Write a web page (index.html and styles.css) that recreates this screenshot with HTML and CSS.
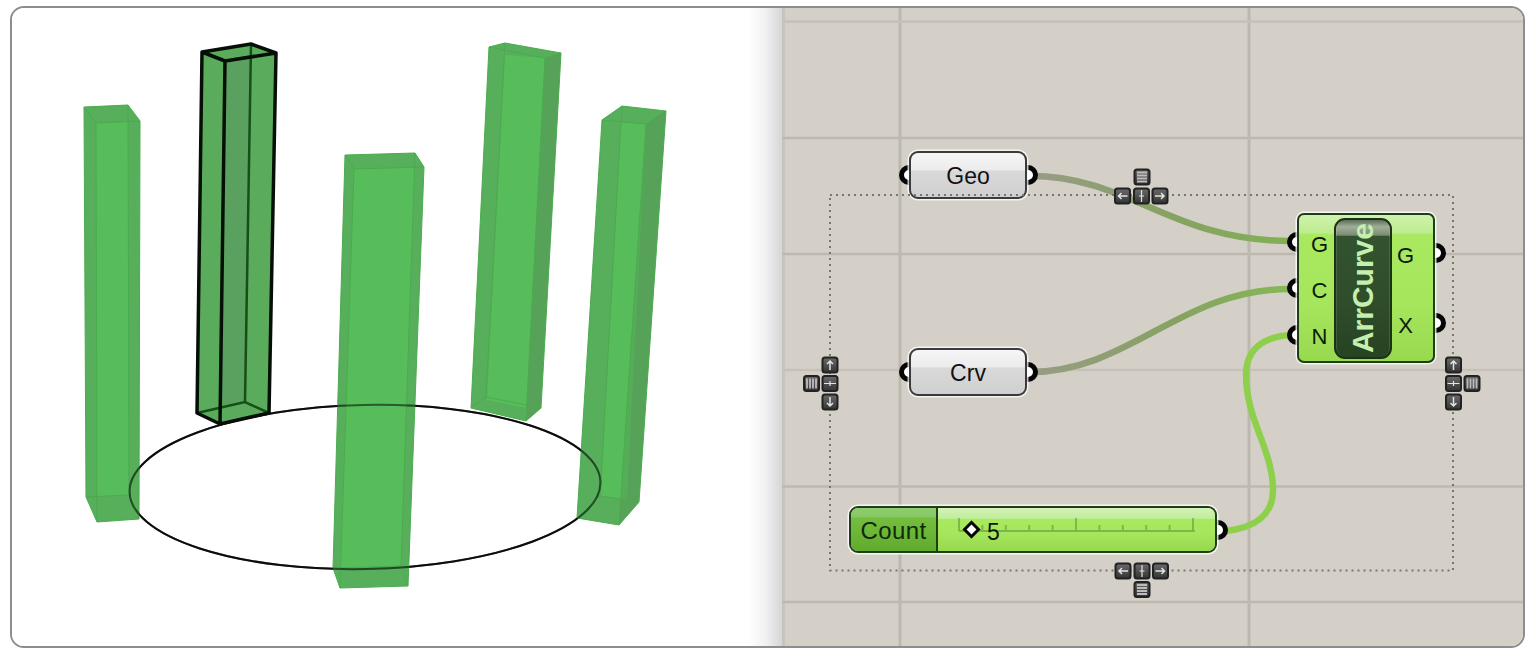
FILE: index.html
```html
<!DOCTYPE html>
<html lang="en">
<head>
<meta charset="utf-8">
<title>ArrCurve</title>
<link rel="stylesheet" href="styles.css">
</head>
<body>
<main class="frame">
  <section class="viewport">
    <svg class="scene" viewBox="12 8 770 638" width="770" height="638" aria-label="3D view">
      <ellipse class="circle" cx="365" cy="487" rx="235.500" ry="82" transform="rotate(-1.200 365 487)"/>

      <g class="box">
        <polygon class="side" points="84,107 128,105 140,121 139,519 97,522 86,497"/>
        <polygon class="mid" points="96,123 128,122 129,495 97,497"/>
        <path class="edge" d="M84 107L128 105L140 121L139 519L97 522L86 497ZM84 107L96 123L140 121M96 123L97 522M128 105L129 495M86 497L129 495L139 519"/>
      </g>

      <g class="box">
        <polygon class="side" points="345,155 415,153 424,167 408,586 340,588 333,568"/>
        <polygon class="mid" points="354,169 415,167 401,566 340,568"/>
        <path class="edge" d="M345 155L415 153L424 167L408 586L340 588L333 568ZM345 155L354 169L424 167M354 169L340 588M415 153L401 566M333 568L401 566L408 586"/>
      </g>

      <g class="box">
        <polygon class="side" points="489,47 505,43 561,53 541,408 526,421 471,408"/>
        <polygon class="mid" points="505,55 545,58 526,408 487,400"/>
        <polygon class="far" points="545,58 561,53 541,408 526,421"/>
        <path class="edge" d="M489 47L505 43L561 53L541 408L526 421L471 408ZM489 47L545 58L561 53M545 58L526 421M505 43L486 397M471 408L486 397L541 408"/>
      </g>

      <g class="box">
        <polygon class="side" points="602,120 622,106 666,111 639,502 619,525 577,518"/>
        <polygon class="mid" points="621,122 646,124 627,499 601,496"/>
        <polygon class="far" points="646,124 666,111 639,502 619,525"/>
        <path class="edge" d="M602 120L622 106L666 111L639 502L619 525L577 518ZM602 120L646 124L666 111M646 124L619 525M622 106L600 496M577 518L600 496L639 502"/>
      </g>

      <g class="box box-selected">
        <polygon class="side" points="202,52 251,44 276,53 269,413 220,424 197,413"/>
        <polygon class="mid" points="225,61 250,58 245,402 220,408"/>
        <path class="hidden-edge" d="M251 44L245 402M197 413L245 402L269 413"/>
        <path class="sel-edge" d="M202 52L251 44L276 53L269 413L220 424L197 413ZM202 52L225 61L276 53M225 61L220 424"/>
      </g>

      <ellipse class="circle circle-over" cx="365" cy="487" rx="235.500" ry="82" transform="rotate(-1.200 365 487)"/>
    </svg>
  </section>

  <section class="canvas">
    <svg class="layer" viewBox="782 8 741 638" width="741" height="638" aria-hidden="true">
      <defs>
        <linearGradient id="wireGeo" gradientUnits="userSpaceOnUse" x1="1030" y1="0" x2="1290" y2="0">
          <stop offset="0" stop-color="#989b86"/>
          <stop offset="0.55" stop-color="#86a262"/>
          <stop offset="1" stop-color="#82b054"/>
        </linearGradient>
        <linearGradient id="wireCrv" gradientUnits="userSpaceOnUse" x1="1030" y1="0" x2="1290" y2="0">
          <stop offset="0" stop-color="#989b86"/>
          <stop offset="0.55" stop-color="#86a262"/>
          <stop offset="1" stop-color="#85b855"/>
        </linearGradient>
      </defs>
      <path class="grid grid-edge" d="M783.500 8V646"/>
      <path class="grid" d="M900 8V646M1249 8V646"/>
      <path class="grid-h grid-faint" d="M782 21.500H1523M782 370H1523"/>
      <path class="grid-h" d="M782 138H1523M782 254H1523M782 486.500H1523M782 602H1523"/>
      <path class="wire wire-geo" d="M1030 176C1130 176 1170 241 1290 241"/>
      <path class="wire wire-crv" d="M1030 372C1130 372 1180 289 1290 289"/>
      <path class="wire wire-num" d="M1290 335C1262 337 1246 350 1246 375C1246 420 1273 450 1273 490C1273 515 1255 528 1225 531"/>
      <circle class="port" cx="909" cy="175" r="7.500"/>
      <circle class="port" cx="1028" cy="175" r="7.500"/>
      <circle class="port" cx="909" cy="372" r="7.500"/>
      <circle class="port" cx="1028" cy="372" r="7.500"/>
      <circle class="port" cx="1297" cy="242" r="7.500"/>
      <circle class="port" cx="1297" cy="288" r="7.500"/>
      <circle class="port" cx="1297" cy="335" r="7.500"/>
      <circle class="port" cx="1436" cy="253" r="7.500"/>
      <circle class="port" cx="1436" cy="323" r="7.500"/>
      <circle class="port" cx="1218" cy="530" r="7.500"/>
    </svg>

    <div class="node node-geo">Geo</div>
    <div class="node node-crv">Crv</div>

    <div class="comp">
      <div class="comp-col comp-in"><span>G</span><span>C</span><span>N</span></div>
      <div class="comp-name"><span>ArrCurve</span></div>
      <div class="comp-col comp-out"><span>G</span><span>X</span></div>
    </div>

    <div class="slider">
      <div class="slider-label">Count</div>
      <div class="slider-track">
        <svg class="ticks" viewBox="0 0 240 16" width="240" height="16" aria-hidden="true">
          <path d="M2 13H238M2 0V13M25.400 7V13M48.800 7V13M72.200 7V13M95.600 7V13M119 0V13M142.400 7V13M165.800 7V13M189.200 7V13M212.600 7V13M236 0V13"/>
        </svg>
        <i class="knob"></i>
        <span class="slider-value">5</span>
      </div>
    </div>

    <svg class="layer layer-top" viewBox="782 8 741 638" width="741" height="638" aria-hidden="true">
      <defs>
        <linearGradient id="gripFill" x1="0" y1="0" x2="0" y2="1">
          <stop offset="0" stop-color="#6a6a6a"/>
          <stop offset="0.5" stop-color="#505050"/>
          <stop offset="1" stop-color="#333"/>
        </linearGradient>
        <g id="g-base"><rect class="grip" x="-7.500" y="-7.500" width="15" height="15" rx="2.500"/></g>
        <g id="g-left"><use href="#g-base"/><path class="glyph" d="M5 0H-4M-1 -3L-4 0L-1 3"/></g>
        <g id="g-right"><use href="#g-base"/><path class="glyph" d="M-5 0H4M1 -3L4 0L1 3"/></g>
        <g id="g-up"><use href="#g-base"/><path class="glyph" d="M0 5V-4M-3 -1L0 -4L3 -1"/></g>
        <g id="g-down"><use href="#g-base"/><path class="glyph" d="M0 -5V4M-3 1L0 4L3 1"/></g>
        <g id="g-midv"><use href="#g-base"/><path class="glyph glyph-thin" d="M0 -6V6M-2.500 0H2.500"/></g>
        <g id="g-midh"><use href="#g-base"/><path class="glyph glyph-thin" d="M-6 0H6M0 -2.500V2.500"/></g>
        <g id="g-rows"><use href="#g-base"/><path class="bars" d="M-5 -4.500H5M-5 -1.500H5M-5 1.500H5M-5 4.500H5"/></g>
        <g id="g-cols"><use href="#g-base"/><path class="bars" d="M-4.500 -5V5M-1.500 -5V5M1.500 -5V5M4.500 -5V5"/></g>
      </defs>
      <rect class="dots" x="830" y="195" width="623" height="375.500"/>
      <use href="#g-rows" x="1142" y="177"/>
      <use href="#g-left" x="1122.500" y="196"/>
      <use href="#g-midv" x="1141.500" y="196"/>
      <use href="#g-right" x="1160" y="196"/>
      <use href="#g-left" x="1123" y="571"/>
      <use href="#g-midv" x="1142" y="571"/>
      <use href="#g-right" x="1160.500" y="571"/>
      <use href="#g-rows" x="1142" y="589.500"/>
      <use href="#g-up" x="830" y="365"/>
      <use href="#g-midh" x="830" y="383.500"/>
      <use href="#g-down" x="830" y="402"/>
      <use href="#g-cols" x="811.500" y="383.500"/>
      <use href="#g-up" x="1453.500" y="365"/>
      <use href="#g-midh" x="1453.500" y="383.500"/>
      <use href="#g-down" x="1453.500" y="402"/>
      <use href="#g-cols" x="1472" y="383.500"/>
    </svg>
  </section>
</main>
</body>
</html>
```

FILE: styles.css
```css
* { box-sizing: border-box; }

html, body {
  margin: 0;
  height: 100%;
  background: #fff;
  overflow: hidden;
}

body {
  padding: 6px 0 0 10px;
  font-family: "Liberation Sans", Arial, sans-serif;
}

.frame {
  display: flex;
  width: 1515px;
  height: 642px;
  border: 2px solid #8d8d8d;
  border-radius: 14px;
  overflow: hidden;
  background: #fff;
}

.viewport {
  position: relative;
  flex: 0 0 770px;
  background: #fff;
}

.viewport::after {
  content: "";
  position: absolute;
  top: 0;
  right: 0;
  bottom: 0;
  width: 34px;
  background: linear-gradient(90deg, rgba(210, 210, 210, 0), rgba(210, 210, 210, .3) 50%, #d6d6d6);
}

.scene { display: block; position: relative; z-index: 1; }

.circle { fill: none; stroke: #0d0d0d; stroke-width: 2; }
.circle-over { opacity: .55; }

.box .side { fill: rgb(64, 163, 68); fill-opacity: .88; }
.box .mid { fill: rgb(88, 192, 90); fill-opacity: .8; }
.box .far { fill: rgb(85, 135, 85); fill-opacity: .3; }
.box .edge { fill: none; stroke: #4bab4e; stroke-width: 1; stroke-linejoin: round; }

.box-selected .side { fill: rgb(62, 156, 64); fill-opacity: .85; }
.box-selected .mid { fill: rgb(90, 150, 95); fill-opacity: .5; }
.hidden-edge { fill: none; stroke: #174f19; stroke-width: 2.500; }
.sel-edge { fill: none; stroke: #060f06; stroke-width: 3.500; stroke-linejoin: round; }

.canvas {
  position: relative;
  flex: 0 0 741px;
  background: #d4d0c8;
  overflow: hidden;
}

.layer { position: absolute; left: 0; top: 0; display: block; }
.layer-top { pointer-events: none; }

.grid { fill: none; stroke: #bcb8b0; stroke-width: 3; }
.grid-edge { stroke: #c7c4bd; }
.grid-h { fill: none; stroke: #bdb9b1; stroke-width: 2.500; }
.grid-faint { stroke: #c5c1b9; }

.wire { fill: none; stroke-width: 6.500; }
.wire-geo { stroke: url(#wireGeo); }
.wire-crv { stroke: url(#wireCrv); }
.wire-num { stroke: #8ed04b; }

.port { fill: #fff; stroke: #050505; stroke-width: 5; }

.dots { fill: none; stroke: #77766f; stroke-width: 2; stroke-dasharray: 2 4; }

.grip { fill: url(#gripFill); stroke: #222; stroke-width: 2; }
.glyph { fill: none; stroke: #e4e4e4; stroke-width: 1.500; }
.glyph-thin { stroke-width: 1.200; }
.bars { fill: none; stroke: #bdbdbd; stroke-width: 1.800; }

.node {
  position: absolute;
  left: 127px;
  width: 118px;
  height: 48px;
  padding-top: 2px;
  display: flex;
  align-items: center;
  justify-content: center;
  font-size: 23px;
  color: #111;
  border: 2px solid #3b3b3b;
  border-radius: 9px;
  background: linear-gradient(180deg, #f6f6f6 0, #ececec 38%, #d9d9d9 41%, #d0d0d0 100%);
  box-shadow: 0 0 0 1.500px rgba(255, 255, 255, .75);
}

.node-geo { top: 143px; }
.node-crv { top: 340px; }

.comp {
  position: absolute;
  left: 515px;
  top: 205px;
  width: 138px;
  height: 150px;
  display: flex;
  border: 2px solid #1e3f15;
  border-radius: 7px;
  background: linear-gradient(180deg, #cff2ad 0, #bdec90 12%, #a9e960 13.500%, #a5e65c 60%, #98d950 100%);
  box-shadow: 0 0 0 1.500px rgba(255, 255, 255, .8);
  color: #0b1a08;
  font-size: 22px;
}

.comp-col { position: relative; flex: 0 0 35px; }
.comp-col span { position: absolute; left: 0; width: 100%; line-height: 22px; text-align: center; }

.comp-in span { left: 3px; }
.comp-in span:nth-child(1) { top: 19px; }
.comp-in span:nth-child(2) { top: 65px; }
.comp-in span:nth-child(3) { top: 111px; }

.comp-out { flex: 0 0 41px; }
.comp-out span { left: -7px; }
.comp-out span:nth-child(1) { top: 30px; }
.comp-out span:nth-child(2) { top: 100px; }

.comp-name {
  flex: 0 0 58px;
  margin-top: 3px;
  height: 141px;
  display: flex;
  align-items: center;
  justify-content: center;
  border: 2px solid #1a3315;
  border-radius: 11px;
  background: linear-gradient(180deg, #5d6f57 0, #9fae98 5%, #7b8e74 11%, #33522e 12%, #2f4d2a 60%, #264322 100%);
  box-shadow: inset 1px 0 0 rgba(255, 255, 255, .12), inset -1px 0 0 rgba(255, 255, 255, .12);
  color: #c4f0ad;
}

.comp-name span {
  writing-mode: vertical-rl;
  transform: rotate(180deg);
  font-size: 30px;
  font-weight: 700;
  line-height: 1;
}

.slider {
  position: absolute;
  left: 67px;
  top: 498px;
  width: 368px;
  height: 47px;
  display: flex;
  border: 2px solid #1e3f15;
  border-radius: 9px;
  overflow: hidden;
  box-shadow: 0 0 0 1.500px rgba(255, 255, 255, .8);
}

.slider-label {
  flex: 0 0 87px;
  padding-top: 3px;
  display: flex;
  align-items: center;
  justify-content: center;
  font-size: 24px;
  letter-spacing: .4px;
  color: #10290a;
  border-right: 2px solid #1e3f15;
  background: linear-gradient(180deg, #8fcc70 0, #86c864 20%, #74bd3f 24%, #60ab2d 100%);
}

.slider-track {
  position: relative;
  flex: 1;
  background: linear-gradient(180deg, #d5f2bb 0, #c0ee98 24%, #a9e960 27%, #a5e65c 60%, #97d84f 100%);
}

.ticks { position: absolute; left: 19px; top: 10px; }
.ticks path { fill: none; stroke: rgba(70, 120, 40, .42); stroke-width: 2; }

.knob {
  position: absolute;
  left: 27px;
  top: 15px;
  width: 13px;
  height: 13px;
  background: #fff;
  border: 3px solid #050505;
  transform: rotate(45deg);
}

.slider-value {
  position: absolute;
  left: 49px;
  top: 11px;
  font-size: 23px;
  line-height: 26px;
  color: #0b1a08;
}
```
